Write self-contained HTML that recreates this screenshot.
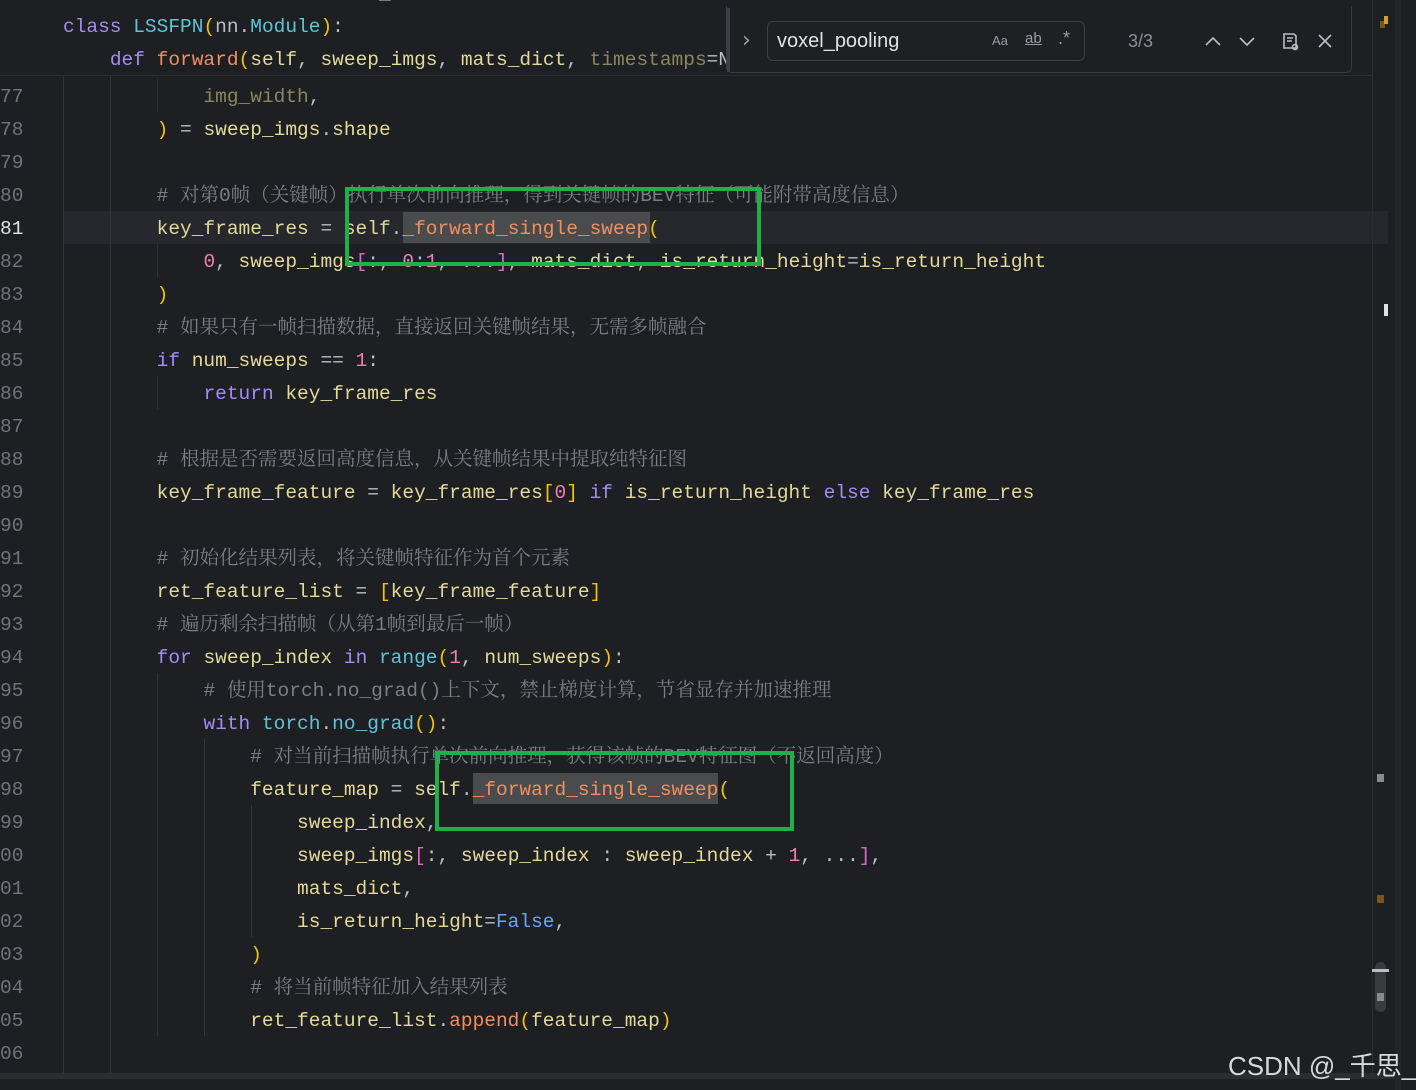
<!DOCTYPE html>
<html><head><meta charset="utf-8"><style>
body{margin:0;width:1416px;height:1090px;background:#1e1f22;overflow:hidden;position:relative;font-family:"Liberation Mono","Noto Serif CJK SC",monospace;}
.l{position:absolute;left:63px;height:33px;line-height:33px;font-size:19.5px;white-space:pre;color:#bcbec4;margin-top:2px}
.n{position:absolute;left:0px;height:33px;line-height:33px;font-size:19.5px;color:#6f737a;font-family:"Liberation Mono",monospace;margin-top:2px}
.k{color:#a48bf5}.v{color:#e2d99b}.f{color:#ef8f62}.p{color:#f2c10f}.m{color:#d869c6}.c{color:#7a7e85;font-family:"Liberation Mono","Noto Serif CJK SC",monospace}.t{color:#5ec4d6}.b{color:#6aa4f8}.d{color:#8a8660}.num{color:#ee7fb0}
.g{position:absolute;width:1px;background:#313338}
.box{position:absolute;border:4px solid #1fb04a;box-sizing:border-box}
</style></head><body>
<div style="position:absolute;left:63px;top:211px;width:1325px;height:33px;background:#26282e"></div>
<div style="position:absolute;left:403px;top:212px;width:247px;height:31px;background:#4a4b4d"></div>
<div style="position:absolute;left:473px;top:773px;width:245px;height:31px;background:#4a4b4d"></div>
<div style="position:absolute;left:0;top:75px;width:1372px;height:1px;background:#2b2d30"></div>
<div class="g" style="left:63px;top:76px;height:997px"></div>
<div class="g" style="left:110px;top:76px;height:997px"></div>
<div class="g" style="left:157px;top:79px;height:33px"></div>
<div class="g" style="left:157px;top:244px;height:33px"></div>
<div class="g" style="left:157px;top:376px;height:33px"></div>
<div class="g" style="left:157px;top:673px;height:363px"></div>
<div class="g" style="left:204px;top:739px;height:297px"></div>
<div class="g" style="left:251px;top:805px;height:132px"></div>

<div class="l" style="top:-24px"><span class="d">    ...             .      _         .          </span></div>
<div class="l" style="top:9px"><span class="k">class</span> <span class="t">LSSFPN</span><span class="p">(</span>nn.<span class="t">Module</span><span class="p">)</span>:</div>
<div class="l" style="top:42px">    <span class="k">def</span> <span class="f">forward</span><span class="p">(</span><span class="v">self</span>, <span class="v">sweep_imgs</span>, <span class="v">mats_dict</span>, <span class="d">timestamps</span>=N</div>

<div class="n" style="top:79px">77</div><div class="l" style="top:79px">            <span class="d">img_width</span>,</div>
<div class="n" style="top:112px">78</div><div class="l" style="top:112px">        <span class="p">)</span> = <span class="v">sweep_imgs</span>.<span class="v">shape</span></div>
<div class="n" style="top:145px">79</div>
<div class="n" style="top:178px">80</div><div class="l" style="top:178px">        <span class="c"># 对第0帧（关键帧）执行单次前向推理，得到关键帧的BEV特征（可能附带高度信息）</span></div>
<div class="n" style="top:211px;color:#dfe1e5">81</div><div class="l" style="top:211px">        <span class="v">key_frame_res</span> = <span class="v">self</span>.<span class="f">_forward_single_sweep</span><span class="p">(</span></div>
<div class="n" style="top:244px">82</div><div class="l" style="top:244px">            <span class="num">0</span>, <span class="v">sweep_imgs</span><span class="m">[</span>:, <span class="num">0</span>:<span class="num">1</span>, ...<span class="m">]</span>, <span class="v">mats_dict</span>, <span class="v">is_return_height</span>=<span class="v">is_return_height</span></div>
<div class="n" style="top:277px">83</div><div class="l" style="top:277px">        <span class="p">)</span></div>
<div class="n" style="top:310px">84</div><div class="l" style="top:310px">        <span class="c"># 如果只有一帧扫描数据，直接返回关键帧结果，无需多帧融合</span></div>
<div class="n" style="top:343px">85</div><div class="l" style="top:343px">        <span class="k">if</span> <span class="v">num_sweeps</span> == <span class="num">1</span>:</div>
<div class="n" style="top:376px">86</div><div class="l" style="top:376px">            <span class="k">return</span> <span class="v">key_frame_res</span></div>
<div class="n" style="top:409px">87</div>
<div class="n" style="top:442px">88</div><div class="l" style="top:442px">        <span class="c"># 根据是否需要返回高度信息，从关键帧结果中提取纯特征图</span></div>
<div class="n" style="top:475px">89</div><div class="l" style="top:475px">        <span class="v">key_frame_feature</span> = <span class="v">key_frame_res</span><span class="p">[</span><span class="num">0</span><span class="p">]</span> <span class="k">if</span> <span class="v">is_return_height</span> <span class="k">else</span> <span class="v">key_frame_res</span></div>
<div class="n" style="top:508px">90</div>
<div class="n" style="top:541px">91</div><div class="l" style="top:541px">        <span class="c"># 初始化结果列表，将关键帧特征作为首个元素</span></div>
<div class="n" style="top:574px">92</div><div class="l" style="top:574px">        <span class="v">ret_feature_list</span> = <span class="p">[</span><span class="v">key_frame_feature</span><span class="p">]</span></div>
<div class="n" style="top:607px">93</div><div class="l" style="top:607px">        <span class="c"># 遍历剩余扫描帧（从第1帧到最后一帧）</span></div>
<div class="n" style="top:640px">94</div><div class="l" style="top:640px">        <span class="k">for</span> <span class="v">sweep_index</span> <span class="k">in</span> <span class="t">range</span><span class="p">(</span><span class="num">1</span>, <span class="v">num_sweeps</span><span class="p">)</span>:</div>
<div class="n" style="top:673px">95</div><div class="l" style="top:673px">            <span class="c"># 使用torch.no_grad()上下文，禁止梯度计算，节省显存并加速推理</span></div>
<div class="n" style="top:706px">96</div><div class="l" style="top:706px">            <span class="k">with</span> <span class="t">torch</span>.<span class="t">no_grad</span><span class="p">()</span>:</div>
<div class="n" style="top:739px">97</div><div class="l" style="top:739px">                <span class="c"># 对当前扫描帧执行单次前向推理，获得该帧的BEV特征图（不返回高度）</span></div>
<div class="n" style="top:772px">98</div><div class="l" style="top:772px">                <span class="v">feature_map</span> = <span class="v">self</span>.<span class="f">_forward_single_sweep</span><span class="p">(</span></div>
<div class="n" style="top:805px">99</div><div class="l" style="top:805px">                    <span class="v">sweep_index</span>,</div>
<div class="n" style="top:838px">00</div><div class="l" style="top:838px">                    <span class="v">sweep_imgs</span><span class="m">[</span>:, <span class="v">sweep_index</span> : <span class="v">sweep_index</span> + <span class="num">1</span>, ...<span class="m">]</span>,</div>
<div class="n" style="top:871px">01</div><div class="l" style="top:871px">                    <span class="v">mats_dict</span>,</div>
<div class="n" style="top:904px">02</div><div class="l" style="top:904px">                    <span class="v">is_return_height</span>=<span class="b">False</span>,</div>
<div class="n" style="top:937px">03</div><div class="l" style="top:937px">                <span class="p">)</span></div>
<div class="n" style="top:970px">04</div><div class="l" style="top:970px">                <span class="c"># 将当前帧特征加入结果列表</span></div>
<div class="n" style="top:1003px">05</div><div class="l" style="top:1003px">                <span class="v">ret_feature_list</span>.<span class="f">append</span><span class="p">(</span><span class="v">feature_map</span><span class="p">)</span></div>
<div class="n" style="top:1036px">06</div>

<div class="box" style="left:345px;top:187px;width:416px;height:79px"></div>
<div class="box" style="left:435px;top:751px;width:359px;height:80px"></div>

<!-- find widget -->
<div style="position:absolute;left:726px;top:6px;width:626px;height:67px;background:#1e1f22;border:1px solid #393b40;border-top:none;border-radius:0 0 6px 6px;box-sizing:border-box"></div>
<div style="position:absolute;left:727px;top:8px;width:3px;height:64px;background:#3c3e43"></div>
<div style="position:absolute;left:742px;top:28px;color:#9a9da3;font:22px 'DejaVu Sans',sans-serif">›</div>
<div style="position:absolute;left:767px;top:21px;width:318px;height:40px;border:1px solid #3c3e43;border-radius:6px;box-sizing:border-box;background:#1f2024"></div>
<div style="position:absolute;left:777px;top:30px;color:#dfe1e5;font:20px 'Liberation Sans',sans-serif">voxel_pooling</div>
<div style="position:absolute;left:992px;top:33px;color:#9a9da3;font:13px 'Liberation Sans',sans-serif">Aa</div>
<div style="position:absolute;left:1025px;top:30px;color:#9a9da3;font:15px 'Liberation Sans',sans-serif;text-decoration:underline">ab</div>
<div style="position:absolute;left:1058px;top:28px;color:#9a9da3;font:18px 'Liberation Sans',sans-serif">.*</div>
<div style="position:absolute;left:1128px;top:31px;color:#8c8f95;font:18px 'Liberation Sans',sans-serif">3/3</div>
<svg style="position:absolute;left:1200px;top:28px" width="140" height="26" fill="none" stroke="#bcbec4" stroke-width="1.6">
<path d="M6 17 L13 10 L20 17"/><path d="M40 10 L47 17 L54 10"/>
<path d="M84 6 H94 L96 8 V20 H84 Z M87 10 H93 M87 13 H92"/><circle cx="95" cy="19" r="2.5"/>
<path d="M119 7 L131 19 M131 7 L119 19"/></svg>

<!-- right side -->
<div style="position:absolute;left:1372px;top:0;width:1px;height:1073px;background:#2b2d30"></div>
<div style="position:absolute;left:1395px;top:0;width:6px;height:1090px;background:#232427"></div>
<div style="position:absolute;left:1380px;top:21px;width:5px;height:7px;background:#7a5519"></div>
<div style="position:absolute;left:1384px;top:16px;width:4px;height:8px;background:#d4a017"></div>
<div style="position:absolute;left:1384px;top:304px;width:4px;height:12px;background:#dfe1e5"></div>
<div style="position:absolute;left:1377px;top:774px;width:7px;height:8px;background:#8a8a8a"></div>
<div style="position:absolute;left:1377px;top:895px;width:7px;height:8px;background:#7a5519"></div>
<div style="position:absolute;left:1375px;top:962px;width:11px;height:50px;background:#3a3b3e;border-radius:6px"></div>
<div style="position:absolute;left:1372px;top:969px;width:17px;height:3px;background:#bcbec4"></div>
<div style="position:absolute;left:1377px;top:993px;width:7px;height:8px;background:#8a8a8a"></div>
<div style="position:absolute;left:0;top:1073px;width:1395px;height:6px;background:#2b2d30"></div>
<div style="position:absolute;left:1228px;top:1046px;color:#d8d8d8;font:26px 'Liberation Sans','Noto Sans CJK SC',sans-serif;white-space:nowrap">CSDN @_千思_</div>
</body></html>
